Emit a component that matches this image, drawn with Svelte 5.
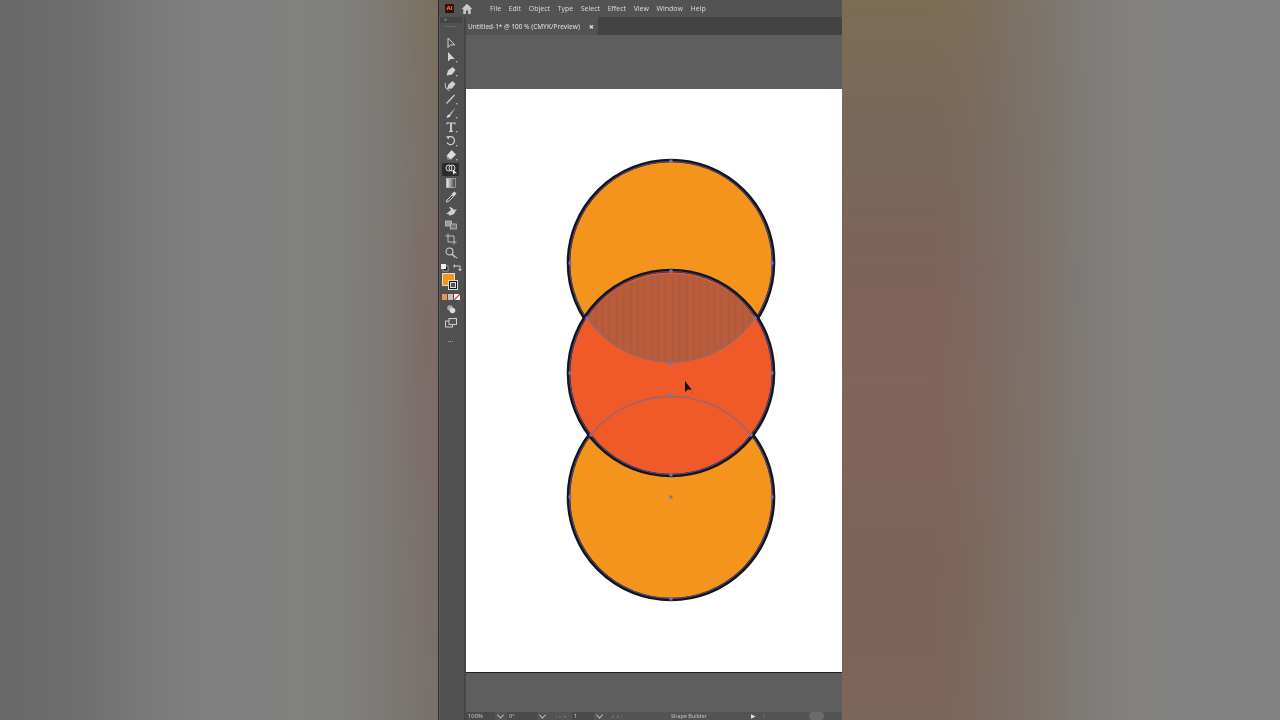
<script>
  const menus = ['File', 'Edit', 'Object', 'Type', 'Select', 'Effect', 'View', 'Window', 'Help'];
  const anchors = [
    [671, 161], [570, 263], [772, 263],
    [671, 271], [570, 373], [772, 373], [671, 475],
    [570, 497], [772, 497], [671, 599], [671, 497],
    [671, 364], [671, 395], [587, 318], [755, 318], [591, 435], [751, 435]
  ];
</script>

<div class="page">
  <div class="side left"></div>

  <main class="app">
    <header class="menubar">
      <div class="logo">Ai</div>
      <svg class="home" viewBox="0 0 12 12"><path d="M6 .8 .6 6h1.7v5h2.6V7.6h2.2V11h2.6V6h1.7z" fill="#c8c8c8" /></svg>
      <nav class="menus">
        {#each menus as m}<span>{m}</span>{/each}
      </nav>
    </header>

    <div class="workspace">
      <aside class="tools">
        <div class="grip">»</div>
        <div class="rule"></div>
        <div class="toolist">
          <svg viewBox="0 0 14 14"><path d="M4 2v9.5l2.6-2.6h4.2z" fill="none" stroke="#cfcfcf" stroke-width="1" /></svg>
          <svg viewBox="0 0 14 14"><path d="M4 2v9.5l2.6-2.6h4.2z" fill="#d4d4d4" /><rect x="12" y="11" width="1.4" height="1.4" fill="#bbb" /></svg>
          <svg viewBox="0 0 14 14"><path d="M2.500 11.500 4 6.500 8.500 3l3 3-3.500 4.500z" fill="#d4d4d4" /><rect x="12" y="11" width="1.4" height="1.4" fill="#bbb" /></svg>
          <svg viewBox="0 0 14 14"><path d="M3 11 4.500 6.500 8.500 3l3 3-3.500 4.500z" fill="#d0d0d0" /><path d="M1.500 5c-1 4 1 7 4 7.500" fill="none" stroke="#ccc" /></svg>
          <svg viewBox="0 0 14 14"><path d="M2.500 11.500 10.500 3" stroke="#d4d4d4" stroke-width="1.100" /><rect x="12" y="11" width="1.4" height="1.4" fill="#bbb" /></svg>
          <svg viewBox="0 0 14 14"><path d="M11.500 2 6 7.500l1 1z" fill="#d4d4d4" /><path d="M5.500 8 3.500 9.500 2.500 12 5.500 11 7 9z" fill="#e0e0e0" /><rect x="12" y="11" width="1.4" height="1.4" fill="#bbb" /></svg>
          <svg viewBox="0 0 14 14"><path d="M2.500 2.500h9v2h-.8l-.5-1H7.900v7.300l1.200.4v.8H4.900v-.8l1.200-.4V3.500H3.800l-.5 1h-.8z" fill="#d4d4d4" /><rect x="12" y="11" width="1.4" height="1.4" fill="#bbb" /></svg>
          <svg viewBox="0 0 14 14"><path d="M4 3.500a4 4 0 1 1-1 5" fill="none" stroke="#cfcfcf" stroke-width="1.200" /><path d="M2 2.500 5.500 2 4.500 5.500z" fill="#cfcfcf" /><rect x="12" y="11" width="1.4" height="1.4" fill="#bbb" /></svg>
          <svg viewBox="0 0 14 14"><path d="M7.500 2 12 6.500 7 11.500 2.500 8z" fill="#dcdcdc" /><path d="M2.500 8 7 11.500H3.500z" fill="#999" /><rect x="12" y="11" width="1.4" height="1.4" fill="#bbb" /></svg>
          <div class="selected">
            <svg viewBox="0 0 14 14"><circle cx="5" cy="6" r="3" fill="none" stroke="#ddd" /><circle cx="8" cy="6" r="3" fill="none" stroke="#ddd" /><path d="M9 7.500v5l1.500-1.200H13z" fill="#eee" /></svg>
          </div>
          <svg viewBox="0 0 14 14"><defs><linearGradient id="grad"><stop offset="0" stop-color="#f0f0f0" /><stop offset="1" stop-color="#3a3a3a" /></linearGradient></defs><rect x="2.500" y="2.500" width="9" height="9" fill="url(#grad)" stroke="#ccc" stroke-width=".6" /></svg>
          <svg viewBox="0 0 14 14"><path d="M2.500 12 3 10 8 5l1.500 1.500-5 5z" fill="none" stroke="#d4d4d4" /><path d="M7.500 4 10.500 1.500 12.500 3.500 10 6.500z" fill="#d4d4d4" /></svg>
          <svg viewBox="0 0 14 14"><path d="M2 10c2-1 3-3 5-4l-2-3c2 0 4 1 5 3l3-1-2 3c0 2-2 3-4 3l-1 1c-1-2-2-2-4-2z" fill="#cfcfcf" /></svg>
          <svg viewBox="0 0 14 14"><rect x="1.500" y="3" width="6" height="5" fill="#9a9a9a" stroke="#ccc" stroke-width=".7" /><rect x="6.500" y="6" width="6" height="5" fill="#777" stroke="#ccc" stroke-width=".7" /></svg>
          <svg viewBox="0 0 14 14"><path d="M4 1.500V10h8.500M1.500 4H10v8.500" fill="none" stroke="#c8c8c8" stroke-width=".9" /></svg>
          <svg viewBox="0 0 14 14"><circle cx="5.500" cy="5.500" r="3.500" fill="none" stroke="#d4d4d4" stroke-width="1.100" /><path d="m8 8 3.500 3.500" stroke="#d4d4d4" stroke-width="1.400" /><rect x="12" y="11" width="1.4" height="1.4" fill="#bbb" /></svg>
          <div class="swaps">
            <svg viewBox="0 0 9 9"><rect x="3" y="3" width="5" height="5" fill="#222" stroke="#ddd" stroke-width=".6" /><rect x="1" y="1" width="5" height="5" fill="#eee" /></svg>
            <svg viewBox="0 0 9 9"><path d="M1.500 3h5.500v5" fill="none" stroke="#ccc" /><path d="M0 3l2-2v4zM5 6l2 2 2-2z" fill="#ccc" /></svg>
          </div>
          <div class="colors">
            <div class="fill"></div>
            <div class="stroke"><div class="hole"></div></div>
          </div>
          <div class="modes">
            <i class="m1"></i><i class="m2"></i>
            <svg viewBox="0 0 6 6"><rect width="6" height="6" fill="#fff" /><path d="M0 6 6 0" stroke="#d22" stroke-width="1.200" /></svg>
          </div>
          <svg class="mini" viewBox="0 0 14 14"><circle cx="6" cy="6" r="2.800" fill="#aaa" /><circle cx="8.500" cy="8.500" r="2.800" fill="#ddd" /></svg>
          <svg class="mini2" viewBox="0 0 14 14"><rect x="1.500" y="5" width="7" height="6" fill="none" stroke="#ccc" /><rect x="5" y="2.500" width="7.500" height="6" fill="#555" stroke="#ccc" /></svg>
          <div class="more">•••</div>
        </div>
      </aside>

      <section class="doc">
        <div class="tabs">
          <div class="tab"><span>Untitled-1* @ 100 % (CMYK/Preview)</span><b>×</b></div>
        </div>
        <div class="canvas">
          <div class="artboard">
            <svg class="art" viewBox="466 89 376 583">
              <defs>
                <pattern id="stripes" width="7" height="8" patternUnits="userSpaceOnUse">
                  <rect width="7" height="8" fill="#b75b3b" />
                  <rect x="0" width="1.500" height="8" fill="#ad5a3f" />
                  <rect x="3.500" width="1" height="8" fill="#bd5f3e" />
                </pattern>
              </defs>

              <circle cx="671" cy="263" r="102.500" fill="#f4941d" stroke="#14141f" stroke-width="3.600" />
              <circle cx="671" cy="497" r="102.500" fill="#f4941d" stroke="#14141f" stroke-width="3.600" />
              <circle cx="671" cy="263" r="101.500" fill="none" stroke="#50508a" stroke-width="1" />
              <circle cx="671" cy="497" r="101.500" fill="none" stroke="#50508a" stroke-width="1" />

              <circle cx="671" cy="373" r="102.500" fill="#f05a29" stroke="#14141f" stroke-width="3.600" />

              <path d="M587 318A102 102 0 0 1 755 318 102 102 0 0 1 587 318Z" fill="url(#stripes)" />
              <path d="M587 318A102 102 0 0 0 755 318" fill="none" stroke="#8a6a78" stroke-width="1.200" />
              <path d="M591 435A102 102 0 0 1 751 435" fill="none" stroke="#a8616a" stroke-width="1.800" />
              <circle cx="671" cy="373" r="101.500" fill="none" stroke="#50508a" stroke-width="1" />

              {#each anchors as a}
                <rect x={a[0] - 1.500} y={a[1] - 1.500} width="3" height="3" fill="#7474bd" />
              {/each}

              <path d="M685 381v11l2.800-2.500 4 .3z" fill="#111" />
              <path d="M692.500 391v3M691 392.500h3" stroke="#d9551c" stroke-width=".8" />
            </svg>
          </div>
        </div>
        <footer class="status">
          <span class="field zoom">100%</span>
          <span class="chev"></span>
          <span class="field angle">0°</span>
          <span class="chev"></span>
          <span class="nav nav-wide">|◂ ◂</span>
          <span class="field page-no">1</span>
          <span class="chev"></span>
          <span class="nav">▸ ▸|</span>
          <span class="tool-name">Shape Builder</span>
          <span class="play">▶</span>
          <span class="nav back">‹</span>
          <span class="oval"></span>
        </footer>
      </section>
    </div>
  </main>

  <div class="side right"></div>
</div>

<style>
  :global(body) { margin: 0; background: #7f7f7f; }
  .page {
    display: grid;
    grid-template-columns: 438px 404px 438px;
    width: 1280px;
    height: 720px;
    overflow: hidden;
    font-family: "Open Sans", "Liberation Sans", sans-serif;
  }
  .side { position: relative; height: 720px; }
  .side::after { content: ""; position: absolute; inset: 0; }
  .left { background: linear-gradient(to right, #696969 0, #6d6d6d 70px, #7a7a7a 150px, #808080 210px, #818180 300px, #7f7e7b 370px, #7a7670 438px); }
  .left::after {
    background: linear-gradient(to bottom, #7c705c 0, #7b6e68 180px, #7e6a66 330px, #7b6e6a 560px, #78716a 720px);
    -webkit-mask-image: linear-gradient(to left, #000 0, rgba(0,0,0,.3) 40px, transparent 90px);
    mask-image: linear-gradient(to left, #000 0, rgba(0,0,0,.3) 40px, transparent 90px);
  }
  .right { background: linear-gradient(to right, #7a6e60 0, #7b7268 130px, #7e7b77 220px, #828180 290px, #828282 438px); }
  .right::after {
    background: linear-gradient(to bottom, #7d6c54 0, #78675a 150px, #7e635a 270px, #81645a 380px, #7d6358 560px, #7c655a 720px);
    -webkit-mask-image: linear-gradient(to right, #000 0, #000 90px, rgba(0,0,0,.4) 170px, transparent 260px);
    mask-image: linear-gradient(to right, #000 0, #000 90px, rgba(0,0,0,.4) 170px, transparent 260px);
  }

  .app {
    display: flex;
    flex-direction: column;
    height: 720px;
    background: #5e5e5e;
    border-left: 1px solid #2e2c2a;
    box-sizing: border-box;
    filter: blur(.3px);
    color: #d2d2d2;
  }
  .menubar {
    display: flex;
    align-items: center;
    height: 17px;
    flex: none;
    background: #535353;
    padding-left: 6px;
  }
  .logo {
    width: 9px; height: 9px;
    background: #3a0c0a;
    color: #ff8a4c;
    font-size: 6px;
    font-weight: 700;
    line-height: 9px;
    text-align: center;
    border-radius: 1px;
  }
  .home { width: 12px; height: 12px; margin-left: 7px; }
  .menus {
    display: flex;
    gap: 7.600px;
    margin-left: 17px;
    font-size: 7px;
    line-height: 17px;
    color: #dcdcdc;
  }

  .workspace { display: flex; flex: 1; min-height: 0; }
  .tools {
    width: 22px;
    flex: none;
    margin-left: 1px;
    padding-right: 2px;
    box-sizing: content-box;
    background: #505050;
    border-right: 2px solid #454545;
  }
  .grip {
    height: 6px;
    font-size: 6px;
    line-height: 5px;
    padding-left: 4px;
    color: #bbb;
    background: #454545;
  }
  .rule { height: 1px; margin: 3px 5px 0; background: #666; }
  .toolist {
    display: flex;
    flex-direction: column;
    align-items: center;
    padding-top: 2px;
    margin-top: 7px;
    margin-left: -1px;
    filter: blur(.3px);
  }
  .toolist > svg { width: 14px; height: 14px; flex: none; }
  .selected {
    width: 17px;
    height: 13px;
    background: #2c2c2c;
    display: flex;
    justify-content: center;
    align-items: center;
    margin: .5px 0;
    border-radius: 1px;
  }
  .selected svg { width: 14px; height: 14px; }
  .swaps { display: flex; gap: 4px; margin-top: 3px; }
  .swaps svg { width: 9px; height: 9px; }
  .colors { position: relative; width: 18px; height: 18px; margin-top: 1px; }
  .fill {
    position: absolute; left: 0; top: 0;
    width: 11px; height: 11px;
    background: #f4941d;
    border: .5px solid #ddd;
  }
  .stroke {
    position: absolute; left: 6px; top: 7px;
    width: 10px; height: 10px;
    box-sizing: border-box;
    background: #111;
    border: 1px solid #ddd;
    display: flex;
    align-items: center;
    justify-content: center;
  }
  .hole { width: 4px; height: 4px; background: #505050; border: .5px solid #ddd; }
  .modes { display: flex; gap: 1px; margin-top: 3px; }
  .modes i { width: 5px; height: 6px; display: block; }
  .modes svg { width: 6px; height: 6px; }
  .m1 { background: #e89a4a; }
  .m2 { background: #c9c0b4; }
  .mini { margin-top: 2px; }
  .more { font-size: 4px; letter-spacing: .5px; margin-top: 8px; color: #ccc; line-height: 8px; }

  .doc { flex: 1; min-width: 0; display: flex; flex-direction: column; }
  .tabs {
    height: 18px;
    flex: none;
    background: #434343;
    display: flex;
  }
  .tab {
    width: 132px;
    background: #535353;
    display: flex;
    align-items: center;
    justify-content: space-between;
    padding: 0 4px 0 2px;
    box-sizing: border-box;
    font-size: 6.400px;
    font-weight: 600;
    white-space: nowrap;
    color: #cfcfcf;
  }
  .tab b { font-size: 9px; color: #e4e4e4; }
  .canvas { flex: 1; min-height: 0; background: #5e5e5e; padding-top: 54px; }
  .artboard { height: 583px; background: #fff; box-shadow: 0 1px 0 #222; }
  .art { display: block; width: 100%; height: 583px; }

  .status {
    display: flex;
    align-items: center;
    height: 8px;
    flex: none;
    background: #535353;
    font-size: 5.800px;
    line-height: 8px;
    color: #d0d0d0;
    overflow: hidden;
  }
  .field { display: block; box-sizing: border-box; padding-left: 2px; background: #4a4a4a; height: 8px; }
  .zoom { width: 29px; }
  .angle { width: 30px; }
  .page-no { width: 22px; }
  .chev {
    width: 4px; height: 4px;
    border-right: 1px solid #ccc;
    border-bottom: 1px solid #ccc;
    transform: rotate(45deg) translate(-1px, -1px);
    margin: 0 4px 0 3px;
  }
  .nav { color: #777; font-size: 5px; width: 15px; text-align: center; margin: 0 2px 0 4px; white-space: nowrap; }
  .nav-wide { margin-right: 4px; }
  .tool-name { margin-left: 44px; color: #c8c8c8; width: 80px; font-size: 5.500px; white-space: nowrap; }
  .play { font-size: 6px; color: #ddd; }
  .back { width: 8px; margin: 0 0 0 4px; font-size: 7px; color: #999; }
  .oval { width: 15px; height: 8px; border-radius: 4px; background: #6b6b6b; margin-left: 41px; }
</style>
